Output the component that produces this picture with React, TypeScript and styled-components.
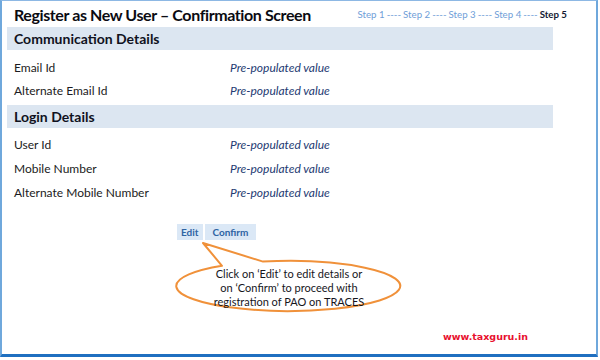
import React from "react";
import styled, { createGlobalStyle } from "styled-components";

const GlobalStyle = createGlobalStyle`
  html, body {
    margin: 0;
    padding: 0;
    background: #ffffff;
  }
  body {
    font-family: Lato, "Open Sans", sans-serif;
  }
`;

interface Field {
  label: string;
  value: string;
}

const communication: Field[] = [
    { label: "Email Id", value: "Pre-populated value" },
    { label: "Alternate Email Id", value: "Pre-populated value" },
  ],
  login: Field[] = [
    { label: "User Id", value: "Pre-populated value" },
    { label: "Mobile Number", value: "Pre-populated value" },
    { label: "Alternate Mobile Number", value: "Pre-populated value" },
  ],
  steps = ["Step 1", "Step 2", "Step 3", "Step 4", "Step 5"];

const Frame = styled.div`
    box-sizing: border-box;
    width: 598px;
    height: 357px;
    display: flex;
    flex-direction: column;
    border-top: 1px solid #8db8e4;
    border-left: 2px solid #6fa8dc;
    border-right: 2px solid #6fa8dc;
    border-bottom: 3px solid #1f6fc0;
    background: #ffffff;
  `,
  Header = styled.div`
    height: 26px;
    display: flex;
    align-items: center;
    justify-content: space-between;
    padding: 0 29px 0 12px;
  `,
  Title = styled.h1`
    margin: 0;
    font-size: 16px;
    font-weight: 700;
    color: #0b0b12;
    letter-spacing: -0.4px;
  `,
  Steps = styled.div`
    display: flex;
    gap: 2px;
    font-size: 9.7px;
    color: #6f9ed8;
    white-space: pre;
  `,
  Step = styled.span<{ $current?: boolean }>`
    font-weight: ${(p) => (p.$current ? 700 : 400)};
    color: ${(p) => (p.$current ? "#141a33" : "#6f9ed8")};
  `,
  Band = styled.div`
    box-sizing: border-box;
    width: 546px;
    height: 23px;
    margin-left: 5px;
    padding-left: 7px;
    display: flex;
    align-items: center;
    background: #dce6f1;
    font-size: 14px;
    font-weight: 700;
    color: #10121e;
  `,
  Rows = styled.div<{ $gap: number; $top: number }>`
    display: flex;
    flex-direction: column;
    padding: ${(p) => p.$top}px 0 0 12px;
    margin-bottom: 3px;
    & > div {
      height: ${(p) => p.$gap}px;
    }
  `,
  Row = styled.div`
    display: grid;
    grid-template-columns: 216px 1fr;
    align-items: center;
    font-size: 12px;
  `,
  Label = styled.span`
    color: #1b1b22;
  `,
  Value = styled.span`
    font-style: italic;
    color: #243a72;
  `,
  Actions = styled.div`
    display: flex;
    gap: 2px;
    margin: 17px 0 0 175px;
  `,
  Button = styled.button<{ $pad?: number }>`
    height: 16px;
    padding: 0 ${(p) => p.$pad ?? 4}px;
    border: 0;
    background: #dbe8f6;
    color: #2f64a3;
    font-family: Lato, "Open Sans", sans-serif;
    font-size: 10px;
    font-weight: 700;
    cursor: pointer;
  `,
  Callout = styled.div`
    position: relative;
    width: 230px;
    height: 72px;
    margin: 2px 0 0 172px;
    svg {
      display: block;
    }
  `,
  CalloutText = styled.div`
    position: absolute;
    left: 0;
    top: 25px;
    width: 230px;
    text-align: center;
    font-size: 11px;
    line-height: 14px;
    color: #16161c;
  `,
  Footer = styled.div`
    margin-top: auto;
    display: flex;
    justify-content: flex-end;
    padding: 0 68px 12px 0;
  `,
  Site = styled.span`
    font-family: "DejaVu Sans", sans-serif;
    font-size: 9.5px;
    font-weight: 700;
    color: #e8102e;
  `;

const FieldRows: React.FC<{ fields: Field[]; gap: number; top: number }> = ({
  fields,
  gap,
  top,
}) => (
  <Rows $gap={gap} $top={top}>
    {fields.map((f) => (
      <Row key={f.label}>
        <Label>{f.label}</Label>
        <Value>{f.value}</Value>
      </Row>
    ))}
  </Rows>
);

const App: React.FC = () => (
  <>
    <GlobalStyle />
    <Frame>
      <Header>
        <Title>Register as New User – Confirmation Screen</Title>
        <Steps>
          {steps.map((s, i) => (
            <React.Fragment key={s}>
              <Step $current={i === steps.length - 1}>{s}</Step>
              {i < steps.length - 1 && <span>----</span>}
            </React.Fragment>
          ))}
        </Steps>
      </Header>
      <Band>Communication Details</Band>
      <FieldRows fields={communication} gap={23} top={6} />
      <Band>Login Details</Band>
      <FieldRows fields={login} gap={24} top={4} />
      <Actions>
        <Button $pad={4}>Edit</Button>
        <Button $pad={8}>Confirm</Button>
      </Actions>
      <Callout>
        <svg width="230" height="72" viewBox="0 0 230 72">
          <path
            d="M 89 19.6 A 112 25 0 1 1 48 23.8 L 29 1 Z"
            fill="#ffffff"
            stroke="#f0913a"
            strokeWidth="2"
            strokeLinejoin="round"
          />
        </svg>
        <CalloutText>
          Click on ‘Edit’ to edit details or
          <br />
          on ‘Confirm’ to proceed with
          <br />
          registration of PAO on TRACES
        </CalloutText>
      </Callout>
      <Footer>
        <Site>www.taxguru.in</Site>
      </Footer>
    </Frame>
  </>
);

export default App;
